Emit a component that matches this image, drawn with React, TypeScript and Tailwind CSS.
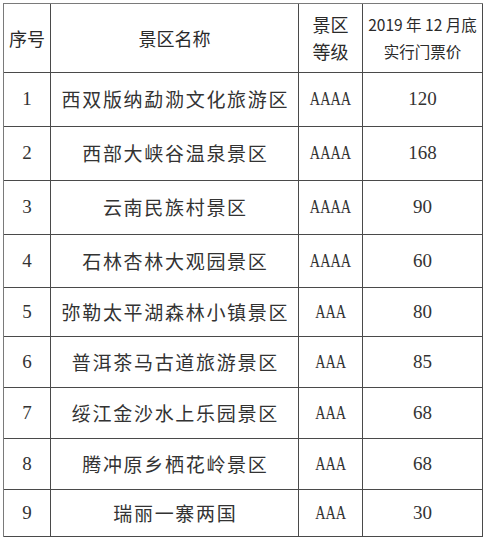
const rows = [
  { no: "1", name: "西双版纳勐泐文化旅游区", level: "AAAA", price: "120" },
  { no: "2", name: "西部大峡谷温泉景区", level: "AAAA", price: "168" },
  { no: "3", name: "云南民族村景区", level: "AAAA", price: "90" },
  { no: "4", name: "石林杏林大观园景区", level: "AAAA", price: "60" },
  { no: "5", name: "弥勒太平湖森林小镇景区", level: "AAA", price: "80" },
  { no: "6", name: "普洱茶马古道旅游景区", level: "AAA", price: "85" },
  { no: "7", name: "绥江金沙水上乐园景区", level: "AAA", price: "68" },
  { no: "8", name: "腾冲原乡栖花岭景区", level: "AAA", price: "68" },
  { no: "9", name: "瑞丽一寨两国", level: "AAA", price: "30" },
];

const cell = "flex items-center justify-center border-r border-b border-[#4a4a4a]";
const sans = "font-['Noto_Sans_CJK_SC',sans-serif]";
const serif = "font-['Liberation_Serif','Noto_Sans_CJK_SC',serif]";

export default function App() {
  return (
    <div className="h-[539px] w-[484px] bg-white pl-[3px] pt-[3px]">
      <div className="grid w-fit grid-cols-[47px_248px_64px_120px] grid-rows-[69px_54px_54px_54px_53px_49px_51px_51px_51px_47px] border-l border-t border-[#7a7a7a] text-[#2a2a2a]">
        <div className={`${cell} ${sans} text-[18px]`}>序号</div>
        <div className={`${cell} ${sans} text-[18px]`}>景区名称</div>
        <div className={`${cell} ${sans} flex-col text-[18px] leading-[27px]`}>
          <span>景区</span>
          <span>等级</span>
        </div>
        <div className={`${cell} ${sans} flex-col text-[15.5px] leading-[27px]`}>
          <span>2019 年 12 月底</span>
          <span>实行门票价</span>
        </div>
        {rows.map((row) => (
          <div key={row.no} className="contents">
            <div className={`${cell} ${serif} text-[19px] text-[#333]`}>{row.no}</div>
            <div className={`${cell} ${sans} text-[19px] tracking-[1.7px] text-[#333]`}>
              <span className="pl-[1.7px]">{row.name}</span>
            </div>
            <div className={`${cell} ${serif} text-[19px] text-[#333]`}>
              <span className="inline-block scale-x-75">{row.level}</span>
            </div>
            <div className={`${cell} ${serif} text-[19px] text-[#333]`}>{row.price}</div>
          </div>
        ))}
      </div>
    </div>
  );
}
